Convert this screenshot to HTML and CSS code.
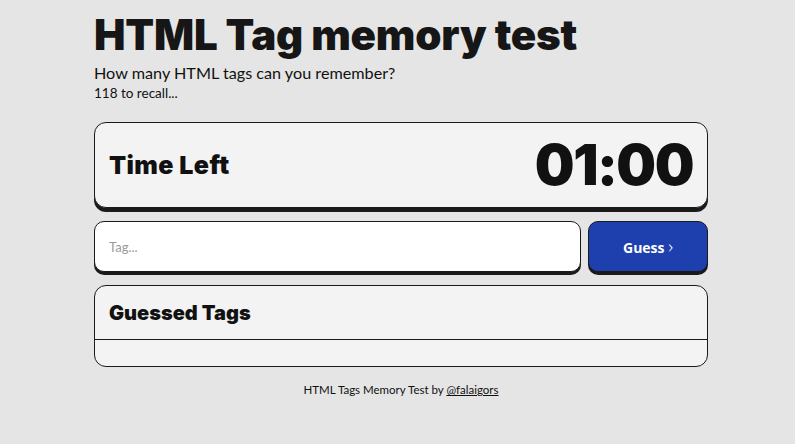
FILE: index.html
```html
<!DOCTYPE html>
<html lang="en">
<head>
  <meta charset="UTF-8">
  <meta name="viewport" content="width=device-width, initial-scale=1.0">
  <title>HTML Tag memory test</title>
  <link rel="stylesheet" href="styles.css">
</head>
<body>
  <div class="container">
    <h1>HTML Tag memory test</h1>
    <p class="subtitle">How many HTML tags can you remember?</p>
    <p class="count">118 to recall...</p>

    <div class="card timer-card">
      <h2>Time Left</h2>
      <div class="timer">01:00</div>
    </div>

    <form class="guess-form">
      <input type="text" class="tag-input" placeholder="Tag...">
      <button type="submit" class="guess-btn">Guess <span class="chev">&rsaquo;</span></button>
    </form>

    <div class="card guessed-card">
      <h2>Guessed Tags</h2>
      <div class="guessed-list"></div>
    </div>

    <p class="footer">HTML Tags Memory Test by <a href="#">@falaigors</a></p>
  </div>
</body>
</html>
```

FILE: styles.css
```css
body {
  margin: 0;
  background-color: #e5e5e5;
  font-family: Lato, "Open Sans", sans-serif;
  color: #111;
}
.container {
  width: 614px;
  margin-left: 94px;
  padding-top: 14px;
}
h1 {
  font-family: Inter, sans-serif;
  font-weight: 900;
  font-size: 42px;
  line-height: 42px;
  letter-spacing: -0.2px;
  margin: 0;
  color: #161616;
}
.subtitle {
  margin: 7px 0 0;
  font-size: 16.2px;
  line-height: 20px;
}
.count {
  margin: 1px 0 0;
  font-size: 13.5px;
  line-height: 18px;
}
.card {
  background-color: #f3f3f3;
  border: 1px solid #1a1a1a;
  border-radius: 12px;
}
.card h2 {
  font-family: Inter, sans-serif;
  font-weight: 900;
  margin: 0;
}
.timer-card {
  margin-top: 20px;
  height: 84px;
  padding: 0 14px;
  display: flex;
  align-items: center;
  justify-content: space-between;
  box-shadow: 0 4px 0 #1a1a1a;
}
.timer-card h2 {
  font-size: 25px;
  letter-spacing: 0.4px;
}
.timer {
  font-family: Inter, sans-serif;
  font-weight: 900;
  font-size: 56px;
  letter-spacing: -1.5px;
  line-height: 1;
}
.guess-form {
  display: flex;
  gap: 7px;
  margin-top: 13px;
}
.tag-input {
  flex: 1;
  height: 51px;
  box-sizing: border-box;
  border: 1px solid #1a1a1a;
  border-radius: 10px;
  background: #fff;
  padding: 0 14px;
  font-family: Lato, sans-serif;
  font-size: 13px;
  box-shadow: 0 3px 0 #1a1a1a;
  outline: none;
}
.tag-input::placeholder {
  color: #9a9a9a;
}
.guess-btn {
  width: 120px;
  height: 51px;
  border: 1px solid #1a1a1a;
  border-radius: 10px;
  background-color: #1e40af;
  color: #fff;
  font-family: "Open Sans", sans-serif;
  font-weight: 700;
  font-size: 14px;
  box-shadow: 0 3px 0 #1a1a1a;
  cursor: pointer;
}
.chev {
  font-weight: 300;
  font-size: 19px;
  line-height: 1;
}
.guessed-card {
  margin-top: 13px;
}
.guessed-card h2 {
  font-size: 20px;
  padding: 15px 14px 0;
  height: 38px;
  border-bottom: 1px solid #1a1a1a;
}
.guessed-list {
  height: 26px;
}
.footer {
  text-align: center;
  font-size: 11.5px;
  margin: 16px 0 0;
}
.footer a {
  color: #111;
  text-decoration: underline;
}
```
